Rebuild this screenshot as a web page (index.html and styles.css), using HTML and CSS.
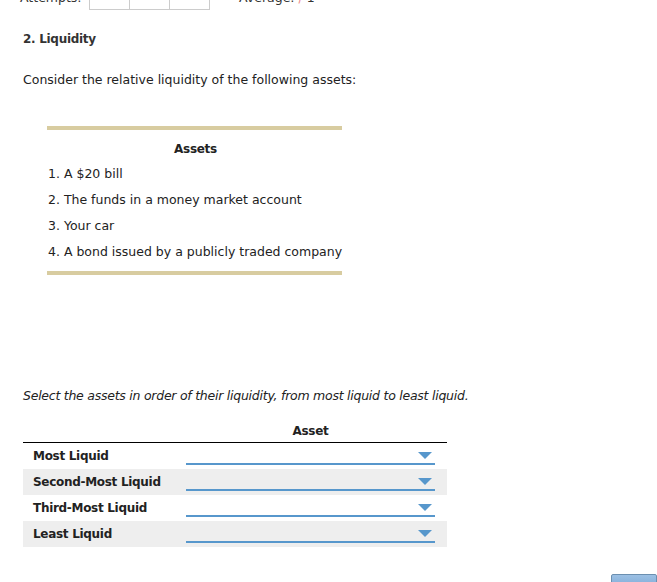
FILE: index.html
```html
<!DOCTYPE html>
<html>
<head>
<meta charset="utf-8">
<link rel="stylesheet" href="styles.css">
</head>
<body>
<div class="page">
  <div class="attempts">
    <span class="att-label">Attempts:</span>
    <div class="boxes"><span class="box"></span><span class="box"></span><span class="box"></span></div>
    <span class="avg">Average: <span class="slash">/</span> 1</span>
  </div>

  <h2 class="title">2. Liquidity</h2>
  <p class="intro">Consider the relative liquidity of the following assets:</p>

  <div class="assets">
    <div class="assets-head">Assets</div>
    <ol class="assets-list">
      <li>1. A $20 bill</li>
      <li>2. The funds in a money market account</li>
      <li>3. Your car</li>
      <li>4. A bond issued by a publicly traded company</li>
    </ol>
  </div>

  <p class="instr">Select the assets in order of their liquidity, from most liquid to least liquid.</p>

  <div class="rank">
    <div class="rank-head"><span class="rank-empty"></span><span class="rank-col">Asset</span></div>
    <div class="rank-row"><span class="rank-label">Most Liquid</span><span class="select"><span class="arrow"></span></span></div>
    <div class="rank-row alt"><span class="rank-label">Second-Most Liquid</span><span class="select"><span class="arrow"></span></span></div>
    <div class="rank-row"><span class="rank-label">Third-Most Liquid</span><span class="select"><span class="arrow"></span></span></div>
    <div class="rank-row alt"><span class="rank-label">Least Liquid</span><span class="select"><span class="arrow"></span></span></div>
  </div>

  <div class="footer"><span class="btn"></span></div>
</div>
</body>
</html>
```

FILE: styles.css
```css
html, body {
  margin: 0;
  padding: 0;
  background: #fff;
  overflow: hidden;
}
.page {
  width: 657px;
  height: 582px;
  font-family: "DejaVu Sans", Verdana, sans-serif;
  font-size: 12.5px;
  color: #222;
  overflow: hidden;
}
.title, .assets-head, .rank-col, .rank-label {
  font-weight: bold;
  font-size: 12px;
  letter-spacing: -0.3px;
}
.attempts {
  display: flex;
  align-items: flex-end;
  margin-top: -20px;
  height: 30px;
}
.att-label {
  margin-left: 20px;
  width: 69px;
  line-height: 14px;
  margin-bottom: 5px;
  color: #333;
}
.boxes {
  display: flex;
}
.box {
  width: 39px;
  height: 29px;
  border: 1px solid #ccc;
  border-right: none;
}
.box:last-child {
  border-right: 1px solid #ccc;
}
.avg {
  margin-left: 29px;
  line-height: 14px;
  margin-bottom: 5px;
  color: #333;
}
.slash { color: #e88; }
.title {
  margin: 21px 0 0 23px;
  line-height: 16px;
  color: #333;
}
.intro {
  margin: 25px 0 0 23px;
  line-height: 16px;
}
.assets {
  margin: 38px 0 0 47px;
  width: 295px;
  border-top: 4px solid #d8cca0;
  border-bottom: 4px solid #d8cca0;
  padding: 9px 0 6px;
}
.assets-head {
  text-align: center;
  line-height: 20px;
  padding-left: 2px;
  margin-bottom: 2px;
}
.assets-list {
  list-style: none;
  margin: 0;
  padding: 0 0 0 1px;
  white-space: nowrap;
}
.assets-list li {
  line-height: 26px;
}
.instr {
  margin: 113px 0 0 23px;
  font-style: italic;
  letter-spacing: -0.25px;
  line-height: 16px;
}
.rank {
  margin: 18px 0 0 23px;
  width: 424px;
}
.rank-head {
  display: flex;
  border-bottom: 1px solid #000;
  height: 20px;
}
.rank-empty {
  width: 163px;
}
.rank-col {
  width: 249px;
  text-align: center;
  line-height: 18px;
}
.rank-row {
  display: flex;
  align-items: stretch;
  height: 26px;
}
.rank-row.alt {
  background: #eee;
}
.rank-label {
  width: 153px;
  padding-left: 10px;
  line-height: 26px;
}
.select {
  width: 249px;
  height: 20px;
  border-bottom: 2px solid #5797cc;
  display: flex;
  justify-content: flex-end;
  align-items: flex-end;
}
.arrow {
  width: 0;
  height: 0;
  border-left: 7px solid transparent;
  border-right: 7px solid transparent;
  border-top: 7px solid #5797cc;
  margin: 0 3px 4px 0;
}
.footer {
  display: flex;
  justify-content: flex-end;
  margin-top: 27px;
}
.btn {
  width: 44px;
  height: 20px;
  border: 1px solid #6b8fb0;
  border-radius: 2px;
  background: linear-gradient(#9cc0e4, #6f9fd0);
}
```
